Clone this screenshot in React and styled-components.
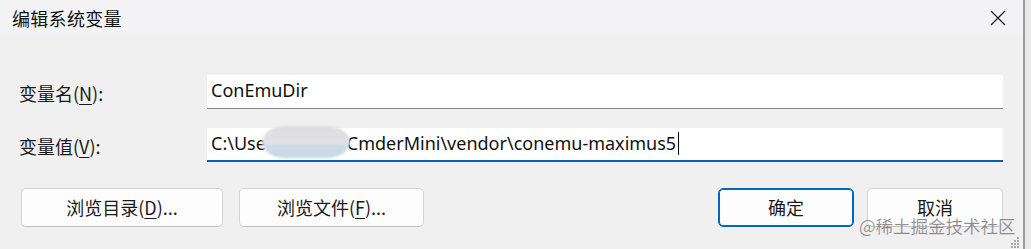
import React from 'react';
import styled, { createGlobalStyle } from 'styled-components';

const GlobalStyle = createGlobalStyle`
  html, body {
    margin: 0;
    padding: 0;
    background: #e9e9e9;
    overflow: hidden;
  }
  body {
    font-family: "Noto Sans", "Noto Sans CJK SC", sans-serif;
    color: #1a1a1a;
  }
`;

const Screen = styled.div`
  display: flex;
  width: 1031px;
  height: 249px;
  position: relative;
`;

const Dialog = styled.div`
  width: 1023px;
  height: 249px;
  display: flex;
  flex-direction: column;
  background: #f0f0f0;
  border-right: 2px solid #9c9c9c;
`;

const TitleBar = styled.div`
  height: 37px;
  flex: none;
  display: flex;
  align-items: center;
  justify-content: space-between;
  padding: 0 17px 2px 12px;
  box-sizing: border-box;
  background: linear-gradient(to bottom, #f3f3f6 0, #f3f3f6 85%, #f1f1f1 100%);
`;

const Title = styled.div`
  font-family: "Noto Sans CJK SC", sans-serif;
  font-size: 18px;
  line-height: 20px;
  letter-spacing: 0.3px;
  color: #111;
`;

const CloseIcon = styled.svg`
  width: 16px;
  height: 16px;
  display: block;
`;

const Body = styled.div`
  padding: 38px 20px 0 19px;
  display: flex;
  flex-direction: column;
`;

const FieldRow = styled.div`
  display: grid;
  grid-template-columns: 188px 796px;
  align-items: center;
  margin-bottom: ${p => p.$gap}px;
`;

const Label = styled.div`
  font-family: "Noto Sans CJK SC", sans-serif;
  font-size: 18px;
  line-height: 24px;
  color: #1a1a1a;
  padding-top: 2px;

  u {
    text-decoration-thickness: 1px;
    text-underline-offset: 3px;
  }
`;

const Field = styled.div`
  height: 34px;
  box-sizing: border-box;
  background: #ffffff;
  border-bottom: ${p => (p.$focused ? '2px solid #005fb8' : '1px solid #868686')};
  display: flex;
  align-items: center;
  padding: 0 0 ${p => (p.$focused ? 2 : 3)}px 4px;
  font-size: 18px;
  color: #111;
  white-space: pre;
`;

const Blur = styled.span`
  align-self: stretch;
  width: 88px;
  margin: -2px -3px 0 -4px;
  border-radius: 44px / 30px;
  background: linear-gradient(
    to bottom,
    #dddddf 0,
    #e2e2e4 55%,
    #cfdbe7 60%,
    #cbd8e5 100%
  );
  filter: blur(1.2px);
`;

const Caret = styled.span`
  width: 1px;
  height: 23px;
  background: #000;
  margin-left: 2px;
`;

const ButtonRow = styled.div`
  display: flex;
  align-items: center;
  padding-left: 2px;
  margin-top: 26px;
`;

const Button = styled.div`
  width: ${p => p.$w}px;
  height: 39px;
  box-sizing: border-box;
  margin-right: ${p => p.$mr || 0}px;
  margin-left: ${p => p.$ml || 0}px;
  display: flex;
  align-items: center;
  justify-content: center;
  background: #fdfdfd;
  border: 1px solid ${p => (p.$primary ? '#0067c0' : '#d3d3d3')};
  border-bottom-color: ${p => (p.$primary ? '#0067c0' : '#c2c2c2')};
  box-shadow: ${p => (p.$primary ? 'inset 0 0 0 1px #0067c0' : 'none')};
  border-radius: 5px;
  font-family: "Noto Sans CJK SC", sans-serif;
  font-size: 18px;
  color: #1a1a1a;
  padding-bottom: 1px;

  u {
    text-decoration-thickness: 1px;
    text-underline-offset: 3px;
  }
`;

const Watermark = styled.div`
  position: absolute;
  left: 859px;
  top: 215px;
  font-family: "Noto Sans CJK SC", sans-serif;
  font-size: 17.5px;
  line-height: 22px;
  color: rgba(105, 105, 105, 0.75);
  -webkit-text-stroke: 0.2px rgba(255, 255, 255, 0.6);
`;

const Grip = styled.svg`
  position: absolute;
  left: 1009px;
  top: 236px;
  width: 12px;
  height: 13px;
`;

const gripDots = [
  [8, 1], [8, 4], [5, 4], [8, 7], [5, 7], [2, 7], [8, 10], [5, 10], [2, 10],
];

export default function App() {
  return (
    <>
      <GlobalStyle />
      <Screen>
        <Dialog>
          <TitleBar>
            <Title>编辑系统变量</Title>
            <CloseIcon viewBox="0 0 16 16">
              <path d="M1 1 L15 15 M15 1 L1 15" stroke="#1a1a1a" strokeWidth="1.3" fill="none" />
            </CloseIcon>
          </TitleBar>
          <Body>
            <FieldRow $gap={19}>
              <Label>变量名(<u>N</u>):</Label>
              <Field>ConEmuDir</Field>
            </FieldRow>
            <FieldRow $gap={0}>
              <Label>变量值(<u>V</u>):</Label>
              <Field $focused>
                <span>C:\Use</span>
                <Blur />
                <span>CmderMini\vendor\conemu-maximus5</span>
                <Caret />
              </Field>
            </FieldRow>
            <ButtonRow>
              <Button $w={202} $mr={16}>浏览目录(<u>D</u>)...</Button>
              <Button $w={185}>浏览文件(<u>F</u>)...</Button>
              <Button $w={136} $ml={294} $primary>确定</Button>
              <Button $w={136} $ml={13}>取消</Button>
            </ButtonRow>
          </Body>
        </Dialog>
        <Watermark>@稀土掘金技术社区</Watermark>
        <Grip viewBox="0 0 12 13">
          {gripDots.map(([x, y]) => (
            <rect key={`${x}-${y}`} x={x} y={y} width="2" height="2" fill="#a8a8a8" />
          ))}
        </Grip>
      </Screen>
    </>
  );
}
